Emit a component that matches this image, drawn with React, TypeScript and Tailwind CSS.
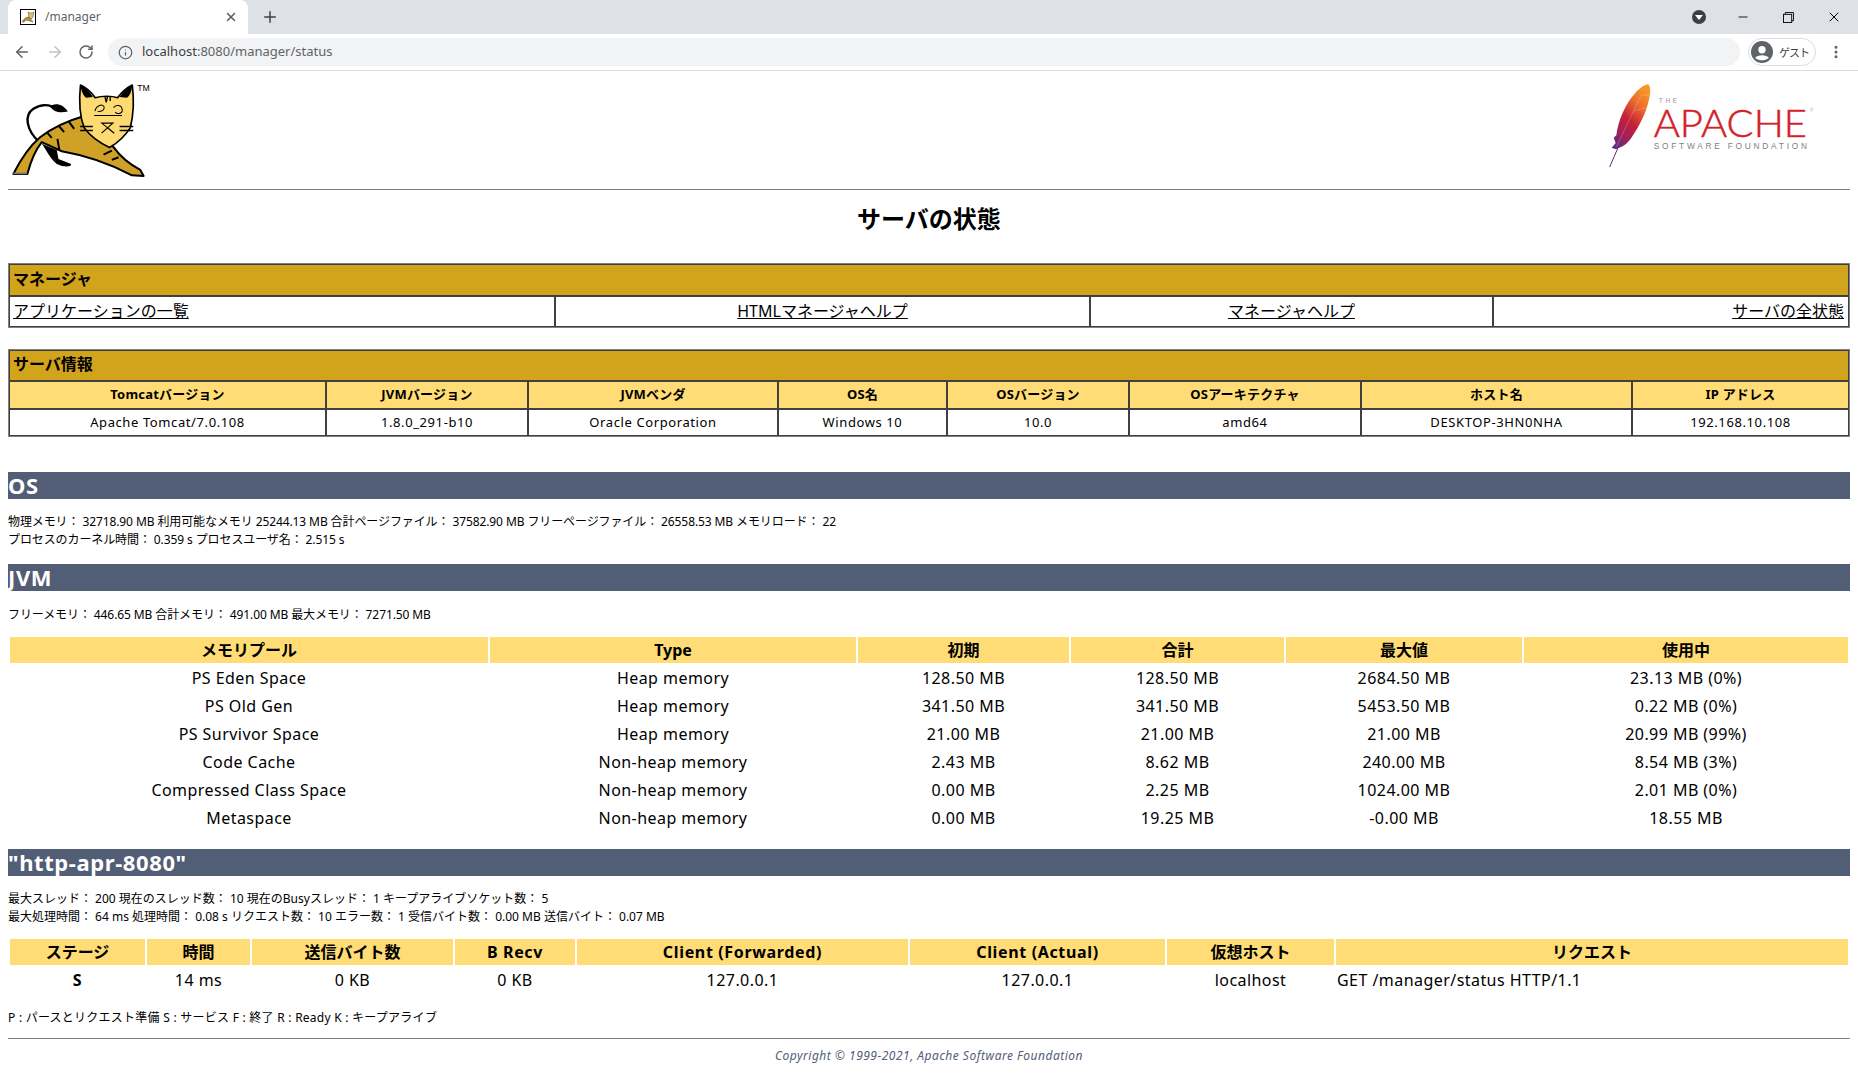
import React from 'react';
import { ArrowLeft, ArrowRight, RotateCw, Info, Plus, X, Minus, EllipsisVertical } from 'lucide-react';

const PAGE_FONT = "font-['Noto_Sans','Noto_Sans_CJK_JP',sans-serif]";

const osInfo = [
  '物理メモリ： 32718.90 MB 利用可能なメモリ 25244.13 MB 合計ページファイル： 37582.90 MB フリーページファイル： 26558.53 MB メモリロード： 22',
  'プロセスのカーネル時間： 0.359 s プロセスユーザ名： 2.515 s',
];

const memoryPools = [
  ['PS Eden Space', 'Heap memory', '128.50 MB', '128.50 MB', '2684.50 MB', '23.13 MB (0%)'],
  ['PS Old Gen', 'Heap memory', '341.50 MB', '341.50 MB', '5453.50 MB', '0.22 MB (0%)'],
  ['PS Survivor Space', 'Heap memory', '21.00 MB', '21.00 MB', '21.00 MB', '20.99 MB (99%)'],
  ['Code Cache', 'Non-heap memory', '2.43 MB', '8.62 MB', '240.00 MB', '8.54 MB (3%)'],
  ['Compressed Class Space', 'Non-heap memory', '0.00 MB', '2.25 MB', '1024.00 MB', '2.01 MB (0%)'],
  ['Metaspace', 'Non-heap memory', '0.00 MB', '19.25 MB', '-0.00 MB', '18.55 MB'],
];

const serverHead = ['Tomcatバージョン', 'JVMバージョン', 'JVMベンダ', 'OS名', 'OSバージョン', 'OSアーキテクチャ', 'ホスト名', 'IP アドレス'];
const serverCols = ['w-[317px]', 'w-[202px]', 'w-[250px]', 'w-[169px]', 'w-[182px]', 'w-[232px]', 'w-[271px]', ''];
const serverRow = ['Apache Tomcat/7.0.108', '1.8.0_291-b10', 'Oracle Corporation', 'Windows 10', '10.0', 'amd64', 'DESKTOP-3HN0NHA', '192.168.10.108'];

const memoryHead = [
  ['メモリプール', 'w-[478px]'],
  ['Type', 'w-[366px]'],
  ['初期', 'w-[211px]'],
  ['合計', 'w-[213px]'],
  ['最大値', 'w-[236px]'],
  ['使用中', ''],
];

const threadHead = [
  ['ステージ', 'w-[135px]', ''],
  ['時間', 'w-[103px]', ''],
  ['送信バイト数', 'w-[201px]', ''],
  ['B Recv', 'w-[120px]', 'tracking-[0.6px]'],
  ['Client (Forwarded)', 'w-[331px]', 'tracking-[0.65px]'],
  ['Client (Actual)', 'w-[255px]', 'tracking-[0.65px]'],
  ['仮想ホスト', 'w-[167px]', ''],
  ['リクエスト', '', ''],
];

const TomcatLogo = () => (
  <svg viewBox="30 245 440 290" className="w-[147px] h-[97px]">
    {/* tail */}
    <path d="M118 425 C 80 390 70 345 100 325 C 120 312 140 312 155 318" fill="none" stroke="#000" strokeWidth="7" />
    <path d="M150 318 C 165 305 190 312 203 333 C 180 338 160 335 150 318 Z" fill="#000" />
    {/* body */}
    <path d="M40 520 C 60 480 85 440 120 410 C 160 380 205 360 248 348 L 340 440 C 365 475 395 495 420 508 L 430 526 L 395 524 C 340 495 260 465 185 452 L 125 425 C 105 450 90 490 82 520 Z" fill="#cfa227" stroke="#000" strokeWidth="6" strokeLinejoin="round" />
    <path d="M40 516 L 82 516 L 80 521 L 40 521 Z" fill="#777" />
    <path d="M125 430 L 170 448 L 175 475 L 213 490 C 215 500 190 500 170 490 C 150 475 140 450 125 430 Z" fill="#000" />
    <path d="M172 415 L 178 450 M140 395 L 155 412 M175 375 L 192 395 M205 362 L 222 385 M335 450 L 310 462 M355 470 L 335 478" stroke="#000" strokeWidth="6" fill="none" />
    {/* head */}
    <path d="M241 254 C 260 262 275 278 285 292 C 305 286 335 286 352 292 C 365 275 380 262 396 254 C 402 300 398 350 390 382 C 372 410 350 428 328 441 C 300 428 272 410 252 382 C 240 350 236 300 241 254 Z" fill="#fedb72" stroke="#000" strokeWidth="5" strokeLinejoin="round" />
    <path d="M241 254 C 258 262 270 276 278 290 L 258 292 C 250 286 244 276 241 254 Z M396 254 C 380 262 368 276 358 290 L 380 292 C 388 286 394 276 396 254 Z" fill="#000" />
    <path d="M314 288 L 318 306 L 322 288 M330 288 L 330 302" stroke="#000" strokeWidth="4" fill="none" />
    <path d="M282 345 L 365 345 M284 332 C 290 310 312 310 312 322 C 312 332 298 335 292 332 M340 322 C 345 312 366 312 366 330 C 366 340 350 342 345 335" stroke="#000" strokeWidth="3" fill="none" />
    <path d="M305 368 L 338 368 L 322 382 Z M322 382 L 304 398 M322 382 L 342 398" stroke="#000" strokeWidth="3.5" fill="none" />
    <path d="M240 378 L 278 378 M240 390 L 278 390 M358 378 L 399 378 M358 390 L 399 390" stroke="#000" strokeWidth="5" />
    <text x="411" y="272" fontSize="26" fontFamily="'Liberation Sans', sans-serif" fill="#000">TM</text>
  </svg>
);

const ApacheLogo = () => (
  <svg viewBox="325 245 630 261" className="w-[210px] h-[87px]">
    <defs>
      <linearGradient id="feather" x1="0.75" y1="0" x2="0.2" y2="1">
        <stop offset="0" stopColor="#f69923" />
        <stop offset="0.25" stopColor="#ee6f2d" />
        <stop offset="0.55" stopColor="#c5203a" />
        <stop offset="0.8" stopColor="#a21f5c" />
        <stop offset="1" stopColor="#5f2c82" />
      </linearGradient>
    </defs>
    <path d="M446 252 C 455 262 452 285 445 310 C 435 345 420 375 398 408 C 390 422 375 438 358 442 L 349 447 L 336 442 L 348 428 L 342 412 L 350 405 C 355 360 378 310 405 280 C 420 263 435 252 446 252 Z" fill="url(#feather)" />
    <path d="M356 440 L 330 500" stroke="#5f2c82" strokeWidth="3" fill="none" />
    <path d="M424 285 L 350 440 M424 285 L 450 283 M402 332 L 440 322" stroke="#f8c9a0" strokeOpacity="0.6" strokeWidth="1.5" fill="none" />
    <text x="477" y="307" fontSize="20" textLength="56" lengthAdjust="spacing" fill="#999" fontFamily="'Liberation Sans', sans-serif">THE</text>
    <text x="462" y="410" fontSize="114" textLength="460" lengthAdjust="spacingAndGlyphs" fill="#d22128" stroke="#d22128" strokeWidth="1.5" fontFamily="Lato, 'Open Sans', sans-serif" fontWeight="300">APACHE</text>
    <text x="930" y="334" fontSize="14" fill="#bbb" fontFamily="'Liberation Sans', sans-serif">®</text>
    <text x="462" y="447" fontSize="25" textLength="460" lengthAdjust="spacing" fill="#808080" fontFamily="'Liberation Sans', sans-serif">SOFTWARE FOUNDATION</text>
  </svg>
);

const Favicon = () => (
  <svg viewBox="0 0 16 16" className="w-4 h-4">
    <rect x="0.5" y="0.5" width="15" height="15" fill="#fff" stroke="#000" />
    <path d="M2 13 C 4 9 7 8 9 8 L 13 13 L 10 12 L 6 11 L 4 13 Z" fill="#b8962e" stroke="#444" strokeWidth="0.5" />
    <path d="M8 3 L 10 4 L 12 4 L 14 3 L 13 8 L 11 10 L 9 8 Z" fill="#e2c263" stroke="#444" strokeWidth="0.5" />
  </svg>
);

const BrowserChrome = () => (
  <div className="font-['Noto_Sans',sans-serif]">
    <div className="h-[34px] bg-[#dee1e6] flex items-end pl-2">
      <div className="w-[240px] h-[34px] bg-white rounded-t-lg flex items-center pl-[12px] pr-[10px] gap-[9px]">
        <Favicon />
        <span className="text-[12px] text-[#5f6368] flex-1">/manager</span>
        <X size={14} strokeWidth={2.5} className="text-[#5a5a5a]" />
      </div>
      <div className="h-[34px] flex items-center ml-[13px]">
        <Plus size={18} strokeWidth={2} className="text-[#3c4043]" />
      </div>
      <div className="flex-1" />
      <div className="h-[34px] flex items-center">
        <div className="w-[14px] h-[14px] rounded-full bg-[#3c4043] flex items-center justify-center mr-[30px]">
          <div className="w-0 h-0 border-l-[4px] border-r-[4px] border-t-[5px] border-l-transparent border-r-transparent border-t-white" />
        </div>
        <Minus size={14} strokeWidth={1.5} className="text-black mr-[33px]" />
        <svg viewBox="0 0 12 12" className="w-[11px] h-[11px] mr-[32px]" fill="none" stroke="#000" strokeWidth="1">
          <rect x="0.5" y="2.5" width="9" height="9" />
          <path d="M2.5 2.5 V0.5 H11.5 V9.5 H9.5" />
        </svg>
        <X size={16} strokeWidth={1.5} className="text-black mr-[16px]" />
      </div>
    </div>
    <div className="h-[37px] bg-white border-b border-[#dadce0] flex items-center">
      <div className="w-[108px] flex items-center pl-[13px] gap-[15px] text-[#5f6368]">
        <ArrowLeft size={18} strokeWidth={2} />
        <ArrowRight size={18} strokeWidth={2} className="text-[#bdc1c6]" />
        <RotateCw size={16} strokeWidth={2.25} className="-ml-[1px]" />
      </div>
      <div className="w-[1632px] h-[28px] rounded-full bg-[#f1f3f4] flex items-center pl-[10px] gap-[9px]">
        <Info size={15} strokeWidth={2} className="text-[#5f6368]" />
        <span className="text-[13px] text-[#5f6368]"><span className="text-[#3c4043]">localhost</span>:8080/manager/status</span>
      </div>
      <div className="ml-[8px] w-[68px] h-[28px] rounded-full border border-[#dadce0] flex items-center pl-[2px] gap-[6px]">
        <svg viewBox="0 0 24 24" className="w-[22px] h-[22px]">
          <circle cx="12" cy="12" r="12" fill="#5f6368" />
          <circle cx="12" cy="9.5" r="4" fill="#fff" />
          <path d="M4.5 18.5 C 7 14.5 17 14.5 19.5 18.5 C 15 22 9 22 4.5 18.5 Z" fill="#fff" />
        </svg>
        <span className="text-[11px] text-[#3c4043] tracking-[-1px] font-['Noto_Sans_CJK_JP',sans-serif]">ゲスト</span>
      </div>
      <EllipsisVertical size={16} strokeWidth={2.5} className="ml-[12px] text-[#5f6368]" />
    </div>
  </div>
);

const SectionBar = ({ title }: { title: string }) => (
  <div className="h-[27px] bg-[#525d76] text-white text-[22px] leading-[27px] font-bold tracking-[0.6px]">{title}</div>
);

const SmallText = ({ lines, spacing = 'tracking-[-0.1px]' }: { lines: string[]; spacing?: string }) => (
  <div className={`text-[12px] leading-[18px] text-black ${spacing}`}>
    {lines.map((l) => <div key={l}>{l}</div>)}
  </div>
);

export default function App() {
  return (
    <div className={`h-[1080px] overflow-hidden bg-white text-black ${PAGE_FONT}`}>
      <BrowserChrome />
      <div className="px-2">
        {/* logos */}
        <div className="h-[118px] flex justify-between items-start pt-[11px] pl-[2px] pr-[32px]">
          <TomcatLogo />
          <ApacheLogo />
        </div>
        <div className="h-px bg-[#808080]" />
        <h1 className="h-[73px] flex items-center justify-center pb-[16px] text-[24px] font-bold">サーバの状態</h1>

        {/* manager */}
        <table className="w-full table-fixed border-separate border-spacing-0 border border-[#808080]">
          <colgroup>
            <col className="w-[546px]" />
            <col className="w-[535px]" />
            <col className="w-[403px]" />
            <col />
          </colgroup>
          <tbody>
            <tr>
              <td colSpan={4} className="h-[32px] pb-[2px] bg-[#d2a41c] border border-[#404040] pl-[3px] text-[16px] font-bold">マネージャ</td>
            </tr>
            <tr className="text-[16px] underline">
              <td className="h-[31px] pb-[2px] border border-[#404040] pl-[3px]">アプリケーションの一覧</td>
              <td className="pb-[2px] border border-[#404040] text-center">HTMLマネージャヘルプ</td>
              <td className="pb-[2px] border border-[#404040] text-center">マネージャヘルプ</td>
              <td className="pb-[2px] border border-[#404040] text-right pr-[4px]">サーバの全状態</td>
            </tr>
          </tbody>
        </table>

        {/* server info */}
        <table className="mt-[21px] w-full table-fixed border-separate border-spacing-0 border border-[#808080]">
          <colgroup>
            {serverCols.map((w, i) => <col key={i} className={w} />)}
          </colgroup>
          <tbody>
            <tr>
              <td colSpan={8} className="h-[31px] pb-[3px] bg-[#d2a41c] border border-[#404040] pl-[3px] text-[16px] font-bold">サーバ情報</td>
            </tr>
            <tr className="text-[13px] font-bold tracking-[0.2px]">
              {serverHead.map((label) => (
                <td key={label} className="h-[28px] bg-[#ffdc75] border border-[#404040] text-center">{label}</td>
              ))}
            </tr>
            <tr className="text-[13px] tracking-[0.6px]">
              {serverRow.map((v) => (
                <td key={v} className="h-[27px] border border-[#404040] text-center">{v}</td>
              ))}
            </tr>
          </tbody>
        </table>

        <div className="mt-[35px]"><SectionBar title="OS" /></div>
        <div className="mt-[14px]"><SmallText lines={osInfo} /></div>

        <div className="mt-[15px]"><SectionBar title="JVM" /></div>
        <div className="mt-[15px]">
          <SmallText lines={['フリーメモリ： 446.65 MB 合計メモリ： 491.00 MB 最大メモリ： 7271.50 MB']} />
        </div>

        <table className="mt-[11px] w-full table-fixed border-separate border-spacing-[2px] text-[16px]">
          <thead>
            <tr className="font-bold">
              {memoryHead.map(([label, w]) => (
                <th key={label} className={`${w} h-[26px] p-0 bg-[#ffdc75] text-center`}>{label}</th>
              ))}
            </tr>
          </thead>
          <tbody className="tracking-[0.45px]">
            {memoryPools.map((row) => (
              <tr key={row[0]}>
                {row.map((v, i) => (
                  <td key={i} className="h-[26px] p-0 text-center">{v}</td>
                ))}
              </tr>
            ))}
          </tbody>
        </table>

        <div className="mt-[16px]"><SectionBar title={'"http-apr-8080"'} /></div>
        <div className="mt-[14px]">
          <SmallText
            spacing="tracking-[0px]"
            lines={[
              '最大スレッド： 200 現在のスレッド数： 10 現在のBusyスレッド： 1 キープアライブソケット数： 5',
              '最大処理時間： 64 ms 処理時間： 0.08 s リクエスト数： 10 エラー数： 1 受信バイト数： 0.00 MB 送信バイト： 0.07 MB',
            ]}
          />
        </div>

        <table className="mt-[11px] w-full table-fixed border-separate border-spacing-[2px] text-[16px]">
          <thead>
            <tr className="font-bold">
              {threadHead.map(([label, w, t]) => (
                <th key={label} className={`${w} ${t} h-[26px] p-0 bg-[#ffdc75] text-center`}>{label}</th>
              ))}
            </tr>
          </thead>
          <tbody className="tracking-[0.45px]">
            <tr>
              <td className="h-[26px] p-0 text-center font-bold">S</td>
              <td className="p-0 text-center">14 ms</td>
              <td className="p-0 text-center">0 KB</td>
              <td className="p-0 text-center">0 KB</td>
              <td className="p-0 text-center">127.0.0.1</td>
              <td className="p-0 text-center">127.0.0.1</td>
              <td className="p-0 text-center">localhost</td>
              <td className="p-0 pl-[1px] text-left">GET /manager/status HTTP/1.1</td>
            </tr>
          </tbody>
        </table>

        <div className="mt-[14px]">
          <SmallText spacing="tracking-[0.25px]" lines={['P : パースとリクエスト準備 S : サービス F : 終了 R : Ready K : キープアライブ']} />
        </div>
        <div className="mt-[11px] h-px bg-[#808080]" />
        <div className="mt-[8px] text-center text-[12px] italic text-[#525d76] tracking-[0.5px]">Copyright © 1999-2021, Apache Software Foundation</div>
      </div>
    </div>
  );
}
